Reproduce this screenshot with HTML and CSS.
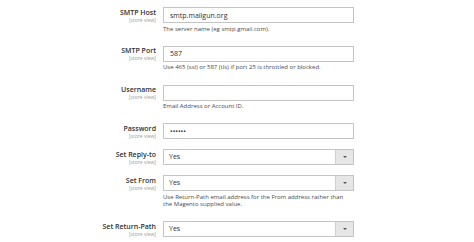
FILE: index.html
```html
<!DOCTYPE html>
<html>
<head>
<meta charset="utf-8">
<link rel="stylesheet" href="styles.css">
</head>
<body>
<div class="form">
  <div class="row">
    <div class="label"><span class="title">SMTP Host</span><span class="scope">[store view]</span></div>
    <div class="control">
      <input class="input" type="text" value="smtp.mailgun.org">
      <div class="note">The server name (eg smtp.gmail.com).</div>
    </div>
  </div>
  <div class="row">
    <div class="label"><span class="title">SMTP Port</span><span class="scope">[store view]</span></div>
    <div class="control">
      <input class="input" type="text" value="587">
      <div class="note">Use 465 (ssl) or 587 (tls) if port 25 is throttled or blocked.</div>
    </div>
  </div>
  <div class="row">
    <div class="label"><span class="title">Username</span><span class="scope">[store view]</span></div>
    <div class="control">
      <input class="input" type="text" value="">
      <div class="note">Email Address or Account ID.</div>
    </div>
  </div>
  <div class="row">
    <div class="label"><span class="title">Password</span><span class="scope">[store view]</span></div>
    <div class="control">
      <input class="input" type="password" value="secret">
    </div>
  </div>
  <div class="row">
    <div class="label"><span class="title">Set Reply-to</span><span class="scope">[store view]</span></div>
    <div class="control">
      <div class="select"><span class="value">Yes</span><span class="arrow"></span></div>
    </div>
  </div>
  <div class="row">
    <div class="label"><span class="title">Set From</span><span class="scope">[store view]</span></div>
    <div class="control">
      <div class="select"><span class="value">Yes</span><span class="arrow"></span></div>
      <div class="note">Use Return-Path email address for the From address rather than the Magento supplied value.</div>
    </div>
  </div>
  <div class="row">
    <div class="label"><span class="title">Set Return-Path</span><span class="scope">[store view]</span></div>
    <div class="control">
      <div class="select"><span class="value">Yes</span><span class="arrow"></span></div>
    </div>
  </div>
</div>
</body>
</html>
```
FILE: styles.css
```css
html, body {
  margin: 0;
  padding: 0;
  background: #fff;
}
body {
  font-family: "Open Sans", "Liberation Sans", sans-serif;
  color: #303030;
}
.form {
  display: flex;
  flex-direction: column;
  gap: 10px;
  padding-top: 7px;
}
.row {
  display: grid;
  grid-template-columns: 156px 191px;
  column-gap: 7px;
  align-items: start;
}
.label {
  display: flex;
  flex-direction: column;
  align-items: flex-end;
  text-align: right;
  padding-top: 1.5px;
}
.title {
  font-size: 7px;
  font-weight: 600;
  line-height: 8px;
  color: #303030;
}
.scope {
  font-size: 5px;
  line-height: 6px;
  color: #9a9a9a;
}
.control {
  display: flex;
  flex-direction: column;
}
.input {
  box-sizing: border-box;
  width: 191px;
  height: 16px;
  margin: 0;
  padding: 0 6px;
  border: 1px solid #c4c4c4;
  border-radius: 0;
  font-family: "Open Sans", "Liberation Sans", sans-serif;
  font-size: 7px;
  color: #303030;
  background: #fff;
  outline: none;
}
.select {
  box-sizing: border-box;
  width: 191px;
  height: 16px;
  border: 1px solid #c4c4c4;
  display: flex;
  align-items: stretch;
  background: #fff;
}
.value {
  flex: 1;
  font-size: 7px;
  line-height: 14px;
  padding-left: 5px;
  color: #303030;
}
.arrow {
  width: 17px;
  background: #e6e6e6;
  border-left: 1px solid #d0d0d0;
  display: flex;
  align-items: center;
  justify-content: center;
}
.arrow::before {
  content: "";
  width: 0;
  height: 0;
  border-left: 2px solid transparent;
  border-right: 2px solid transparent;
  border-top: 2.5px solid #555;
}
.note {
  font-size: 6px;
  line-height: 7.3px;
  margin-top: 2.5px;
  margin-bottom: 3px;
  color: #4a4a4a;
}
```
